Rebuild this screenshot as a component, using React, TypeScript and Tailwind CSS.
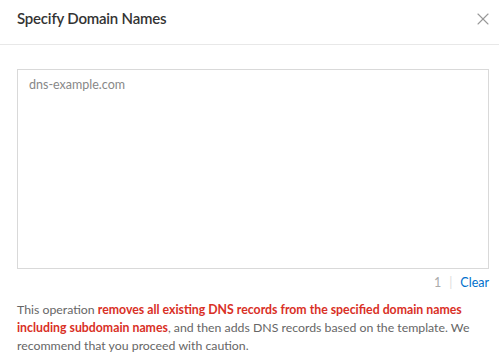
import { X } from "lucide-react";

const App = () => {
  return (
    <div className="w-[499px] h-[362px] bg-white overflow-hidden font-['Lato',sans-serif] text-[#333]">
      {/* Header */}
      <div className="h-[45px] flex items-center justify-between pl-[17px] pr-[6px] border-b border-[#e8e8e8]">
        <h2 className="text-[15px] font-semibold tracking-[-0.2px] text-[#333] -mt-[7px]">Specify Domain Names</h2>
        <button className="text-[#999] -mt-[7px]">
          <X className="w-[20px] h-[20px]" strokeWidth={1.3} />
        </button>
      </div>

      {/* Body */}
      <div className="pl-[17px] pr-[10px] pt-[24px]">
        <textarea
          className="block w-[472px] h-[200px] border border-[#d9d9d9] px-[11px] py-[6px] text-[12.5px] leading-[18px] resize-none outline-none placeholder:text-[#888]"
          placeholder="dns-example.com"
        />
        <div className="flex justify-end items-center gap-[8px] mt-[6px] text-[12.5px] leading-[16px]">
          <span className="text-[#aaa]">1</span>
          <span className="text-[#ddd]">|</span>
          <a className="text-[#0070cc]">Clear</a>
        </div>
        <p className="mt-[10px] text-[12.3px] leading-[18px] text-[#666] whitespace-nowrap">
          This operation{" "}
          <span className="font-bold text-[#d93026]">
            removes all existing DNS records from the specified domain names
            <br />
            including subdomain names
          </span>
          , and then adds DNS records based on the template. We
          <br />
          recommend that you proceed with caution.
        </p>
      </div>
    </div>
  );
};

export default App;
